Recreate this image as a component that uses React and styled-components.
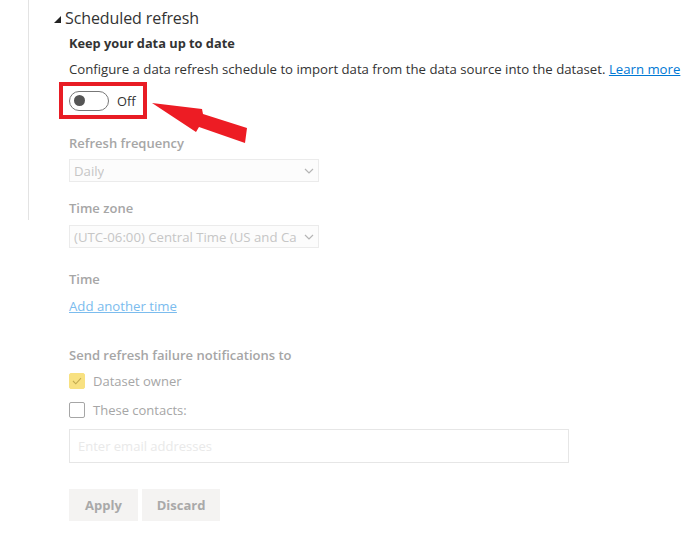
import React from 'react';
import styled, { createGlobalStyle } from 'styled-components';

const GlobalStyle = createGlobalStyle`
  body {
    margin: 0;
    background: #fff;
    font-family: "Open Sans", "Noto Sans", sans-serif;
  }
`;

const Page = styled.div`
  position: relative;
  width: 697px;
  height: 544px;
  overflow: hidden;
  display: flex;
`;

const Rail = styled.div`
  width: 28px;
  flex-shrink: 0;
  align-self: flex-start;
  height: 220px;
  border-right: 1px solid #e3e3e3;
`;

const Section = styled.div`
  padding-left: 25px;
  padding-top: 6px;
`;

const Header = styled.div`
  display: flex;
  align-items: center;
  gap: 4px;
  font-size: 16px;
  color: #333;
  height: 24px;
  letter-spacing: -0.1px;
`;

const Caret = styled.span`
  width: 0;
  height: 0;
  border-left: 7px solid transparent;
  border-bottom: 7px solid #222;
  margin-top: 2px;
`;

const Body = styled.div`
  padding-left: 15px;
  display: flex;
  flex-direction: column;
`;

const Title = styled.div`
  font-size: 12.8px;
  font-weight: 700;
  color: #333;
  margin-top: 4px;
  height: 18px;
`;

const Desc = styled.div`
  font-size: 13.2px;
  color: #333;
  white-space: nowrap;
  margin-top: ${p => p.gap || 0}px;
  height: 18px;
`;

const Link = styled.a`
  color: ${p => (p.disabled ? '#7bbcee' : '#0078d4')};
  text-decoration: underline;
  cursor: pointer;
`;

const Highlight = styled.div`
  align-self: flex-start;
  margin-left: -10px;
  margin-top: 4px;
  border: 4px solid #e81c24;
  padding: 4px 6px;
  box-sizing: border-box;
  width: 88px;
  height: 37px;
  display: flex;
  align-items: center;
  gap: 8px;
`;

const Toggle = styled.div`
  width: 40px;
  height: 20px;
  box-sizing: border-box;
  border: 1px solid #777;
  border-radius: 10px;
  display: flex;
  align-items: center;
  padding-left: 4px;
`;

const Knob = styled.span`
  width: 11px;
  height: 11px;
  border-radius: 50%;
  background: #555;
`;

const ToggleText = styled.span`
  font-size: 12.8px;
  color: #333;
`;

const Label = styled.div`
  font-size: 13px;
  font-weight: 600;
  color: #a6a6a6;
  margin-top: ${p => p.gap || 0}px;
  height: 18px;
`;

const Select = styled.div`
  width: 250px;
  height: 23px;
  box-sizing: border-box;
  margin-top: ${p => p.gap || 0}px;
  border: 1px solid #ebebeb;
  background: #fcfcfc;
  display: flex;
  align-items: center;
  justify-content: space-between;
  padding: 0 4px;
  font-size: 13.2px;
  color: #c6c6c6;
  white-space: nowrap;
  overflow: hidden;
`;

const SelectText = styled.span`
  overflow: hidden;
`;

const Chevron = styled.svg`
  flex-shrink: 0;
  margin-left: 2px;
`;

const CheckRow = styled.div`
  display: flex;
  align-items: center;
  gap: 8px;
  margin-top: ${p => p.gap || 0}px;
  height: 18px;
  font-size: 13px;
  color: #a6a6a6;
`;

const Box = styled.span`
  width: 16px;
  height: 16px;
  box-sizing: border-box;
  border-radius: 2px;
  background: ${p => (p.checked ? '#f8e181' : '#fff')};
  border: 1px solid ${p => (p.checked ? '#f8e181' : '#a6a6a6')};
  display: flex;
  align-items: center;
  justify-content: center;
`;

const EmailInput = styled.div`
  width: 500px;
  height: 34px;
  box-sizing: border-box;
  margin-top: 10px;
  border: 1px solid #e6e6e6;
  display: flex;
  align-items: center;
  padding-left: 8px;
  font-size: 13px;
  color: #e9e9e9;
`;

const Buttons = styled.div`
  display: flex;
  gap: 4px;
  margin-top: 26px;
`;

const Button = styled.div`
  width: ${p => p.w}px;
  height: 32px;
  background: #f4f3f2;
  display: flex;
  align-items: center;
  justify-content: center;
  font-size: 13px;
  font-weight: 700;
  color: #a9a9a9;
`;

const Arrow = styled.svg`
  position: absolute;
  left: 0;
  top: 0;
  pointer-events: none;
`;

const ChevronIcon = () => (
  <Chevron width="10" height="10" viewBox="0 0 10 10">
    <path d="M1 3 L5 7 L9 3" fill="none" stroke="#b5b5b5" strokeWidth="1.2" />
  </Chevron>
);

export default function App() {
  return (
    <Page>
      <GlobalStyle />
      <Rail />
      <Section>
        <Header>
          <Caret />
          Scheduled refresh
        </Header>
        <Body>
          <Title>Keep your data up to date</Title>
          <Desc gap={8}>
            Configure a data refresh schedule to import data from the data source into the dataset.{' '}
            <Link>Learn more</Link>
          </Desc>
          <Highlight>
            <Toggle>
              <Knob />
            </Toggle>
            <ToggleText>Off</ToggleText>
          </Highlight>

          <Label gap={15}>Refresh frequency</Label>
          <Select gap={7}>
            <SelectText>Daily</SelectText>
            <ChevronIcon />
          </Select>

          <Label gap={17}>Time zone</Label>
          <Select gap={8}>
            <SelectText>(UTC-06:00) Central Time (US and Ca</SelectText>
            <ChevronIcon />
          </Select>

          <Label gap={22}>Time</Label>
          <Desc gap={9}>
            <Link disabled>Add another time</Link>
          </Desc>

          <Label gap={31}>Send refresh failure notifications to</Label>
          <CheckRow gap={8}>
            <Box checked>
              <svg width="10" height="8" viewBox="0 0 10 8">
                <path d="M1 4 L3.8 6.8 L9 1.2" fill="none" stroke="#c3ab50" strokeWidth="1.1" />
              </svg>
            </Box>
            Dataset owner
          </CheckRow>
          <CheckRow gap={11}>
            <Box />
            These contacts:
          </CheckRow>
          <EmailInput>Enter email addresses</EmailInput>

          <Buttons>
            <Button w={69}>Apply</Button>
            <Button w={78}>Discard</Button>
          </Buttons>
        </Body>
      </Section>
      <Arrow width="697" height="544" viewBox="0 0 697 544">
        <polygon
          points="152,103 202,109 203,114 247,128 245,143 199,127 196,132"
          fill="#ed1c24"
        />
      </Arrow>
    </Page>
  );
}
